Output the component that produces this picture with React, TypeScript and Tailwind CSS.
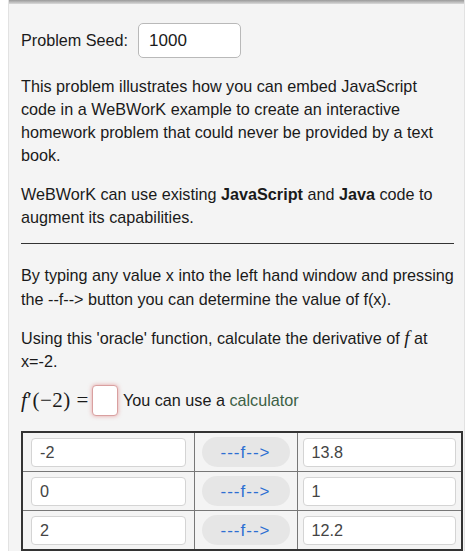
import React from "react";

const rows = [
  { x: "-2", y: "13.8" },
  { x: "0", y: "1" },
  { x: "2", y: "12.2" },
];

const App: React.FC = () => {
  return (
    <div className="h-[551px] bg-white font-['Liberation_Sans',Arial,sans-serif] text-[16.2px] leading-[23px] text-[#1a1a1a] overflow-hidden">
      <div className="mx-[8px] w-[457px] h-full bg-[#f4f4f4] border-x border-[#e2e2e2]">
        <div className="h-[4px] bg-gradient-to-b from-[#9a9a9a] to-[#dadada]" />
        <div className="px-[12px] pt-[19px]">
          <div className="flex items-center gap-[10px]">
            <span>Problem Seed:</span>
            <div className="w-[103px] h-[35px] bg-white border border-[#b9b9b9] rounded-[5px] px-[10px] flex items-center text-[17px]">
              1000
            </div>
          </div>

          <p className="mt-[17px]">
            This problem illustrates how you can embed JavaScript code in a WeBWorK example to create an interactive
            homework problem that could never be provided by a text book.
          </p>
          <p className="mt-[16px]">
            WeBWorK can use existing <b>JavaScript</b> and <b>Java</b> code to augment its capabilities.
          </p>

          <hr className="mt-[14px] mb-[19px] border-t border-[#333] w-[433px]" />

          <p className="leading-[24px] w-[444px]">
            By typing any value x into the left hand window and pressing the --f--&gt; button you can determine the value
            of f(x).
          </p>
          <p className="mt-[16px]">
            Using this 'oracle' function, calculate the derivative of{" "}
            <i className="font-['Liberation_Serif',serif] text-[19px] leading-[20px]">f</i> at x=-2.
          </p>

          <div className="mt-[11px] flex items-center h-[32px]">
            <span className="font-['Liberation_Serif',serif] text-[21px] leading-[24px] tracking-[0.5px]">
              <i>f</i>′(−2) =
            </span>
            <div className="ml-[3px] w-[26px] h-[31px] bg-white border border-[#d9a0a0] rounded-[4px] shadow-[0_0_4px_rgba(220,80,80,0.5)]" />
            <span className="ml-[5px]">
              You can use a <span className="text-[#3c5f45]">calculator</span>
            </span>
          </div>

          <table className="mt-[15px] w-[442px] border-2 border-[#333] border-collapse">
            <tbody>
              {rows.map((r, i) => (
                <tr key={i} className="h-[38px]">
                  <td className="w-[172px] border border-[#777] px-[8px] py-[4px]">
                    <div className="h-[29px] bg-white border border-[#d4d4d4] rounded-[4px] px-[8px] flex items-center text-[#444]">
                      {r.x}
                    </div>
                  </td>
                  <td className="w-[103px] border border-[#777] px-[7px] py-[4px]">
                    <div className="h-[30px] bg-[#e6e6e6] rounded-full flex items-center justify-center text-[#2d6fd2] text-[17px] tracking-[1px]">
                      ---f--&gt;
                    </div>
                  </td>
                  <td className="border border-[#777] px-[5px] py-[4px]">
                    <div className="h-[29px] bg-white border border-[#d4d4d4] rounded-[4px] px-[8px] flex items-center text-[#444]">
                      {r.y}
                    </div>
                  </td>
                </tr>
              ))}
            </tbody>
          </table>
        </div>
      </div>
    </div>
  );
};

export default App;
